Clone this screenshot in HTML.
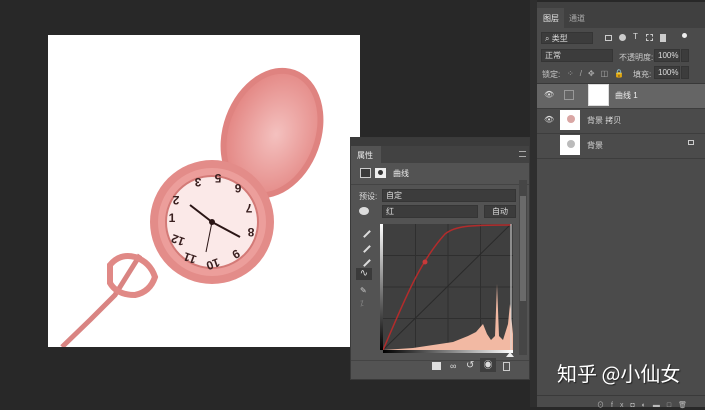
<!DOCTYPE html>
<html><head><meta charset="utf-8"><style>
*{margin:0;padding:0;box-sizing:border-box}
body{width:705px;height:407px;background:#282828;position:relative;overflow:hidden;font-family:"Liberation Sans","Noto Sans CJK SC",sans-serif;color:#ddd;font-size:8px}
.a{position:absolute}
.field{position:absolute;background:#3c3c3c;border:1px solid #353535;color:#ddd;font-size:8px;line-height:11px;padding-left:3px}
</style></head><body>
<div class="a" style="left:48px;top:35px;width:312px;height:312px;background:#fff;overflow:hidden">
<svg width="312" height="312" viewBox="48 35 312 312">
 <defs><radialGradient id="g1" cx="55%" cy="50%" r="55%"><stop offset="0" stop-color="#f4c1bf"/><stop offset="1" stop-color="#e48986"/></radialGradient></defs>
 <ellipse cx="272" cy="133" rx="49" ry="67" transform="rotate(20 272 133)" fill="#df8380"/>
 <ellipse cx="272" cy="133" rx="43" ry="61" transform="rotate(20 272 133)" fill="url(#g1)"/>
 <path d="M140 255 L115 295 L90 320 L62 347" stroke="#d98482" stroke-width="5" fill="none"/>
 <path d="M110 265 q10 -12 25 -8 q15 5 20 20 q-5 15 -20 18 q-18 0 -25 -12z" stroke="#e08986" stroke-width="6" fill="none"/>
 <circle cx="212" cy="222" r="62" fill="#e38c89"/>
 <circle cx="212" cy="222" r="54" fill="#ec9e9b"/>
 <circle cx="212" cy="222" r="46" fill="#fbe9e8" stroke="#d37a77" stroke-width="2"/>
 <g font-family="Liberation Sans" font-size="12" fill="#3a2020" font-weight="bold" text-anchor="middle">
  <text x="198" y="186" transform="rotate(180 198 182)">3</text><text x="218" y="182" transform="rotate(180 218 178)">5</text><text x="238" y="192" transform="rotate(180 238 188)">6</text>
  <text x="249" y="212" transform="rotate(180 249 208)">7</text><text x="251" y="236" transform="rotate(180 251 232)">8</text><text x="236" y="258" transform="rotate(150 236 254)">9</text>
  <text x="213" y="268" transform="rotate(160 213 264)">10</text><text x="190" y="262" transform="rotate(200 190 258)">11</text><text x="178" y="244" transform="rotate(200 178 240)">12</text>
  <text x="172" y="222">1</text><text x="176" y="204" transform="rotate(180 176 200)">2</text>
 </g>
 <line x1="212" y1="222" x2="190" y2="205" stroke="#2a1515" stroke-width="2"/>
 <line x1="212" y1="222" x2="240" y2="237" stroke="#2a1515" stroke-width="2"/>
 <line x1="212" y1="222" x2="206" y2="252" stroke="#2a1515" stroke-width="1"/>
 <circle cx="212" cy="222" r="3" fill="#2a1515"/>
</svg>
</div>
<div class="a" style="left:350px;top:137px;width:180px;height:243px;background:#535353;border:1px solid #3a3a3a">
 <div class="a" style="left:0;top:0;width:178px;height:8px;background:#3b3b3b"></div>
 <div class="a" style="left:0;top:8px;width:178px;height:17px;background:#424242"></div>
 <div class="a" style="left:0;top:8px;width:30px;height:17px;background:#535353;padding:4px 0 0 6px;color:#eee">属性</div>
 <div class="a" style="left:168px;top:13px;width:7px;height:6px;border-top:1px solid #aaa;border-bottom:1px solid #aaa"></div>
 <div class="a" style="left:9px;top:30px;width:11px;height:10px;border:1px solid #ccc;background:#3a3a3a"></div>
 <div class="a" style="left:24px;top:30px;width:11px;height:10px;background:#eee"><div style="width:5px;height:5px;border-radius:50%;background:#333;margin:2px 3px"></div></div>
 <div class="a" style="left:42px;top:30px;color:#eee">曲线</div>
 <div class="a" style="left:0;top:46px;width:178px;height:1px;background:#444"></div>
 <div class="a" style="left:8px;top:53px">预设:</div>
 <div class="field" style="left:31px;top:51px;width:134px;height:13px">自定</div>
 <div class="a" style="left:8px;top:69px;width:10px;height:8px;border-radius:50%;background:#ddd"></div>
 <div class="field" style="left:31px;top:67px;width:96px;height:13px">红</div>
 <div class="field" style="left:133px;top:67px;width:32px;height:13px;text-align:center;padding:0">自动</div>
 <div class="a" style="left:9px;top:89px;width:9px;height:9px;border-bottom:2px solid #ddd;transform:rotate(-45deg)"></div>
 <div class="a" style="left:9px;top:104px;width:9px;height:9px;border-bottom:2px solid #ddd;transform:rotate(-45deg)"></div>
 <div class="a" style="left:9px;top:118px;width:9px;height:9px;border-bottom:2px solid #ddd;transform:rotate(-45deg)"></div>
 <div class="a" style="left:5px;top:130px;width:16px;height:12px;background:#3a3a3a;color:#ddd;font-size:10px;line-height:11px;text-align:center">∿</div>
 <div class="a" style="left:9px;top:148px;color:#ccc">✎</div>
 <div class="a" style="left:9px;top:161px;color:#888">⁒</div>
 <div class="a" style="left:29px;top:86px;width:3px;height:126px;background:linear-gradient(#fff,#000)"></div>
 <svg class="a" style="left:32px;top:86px" width="130" height="126">
  <rect width="130" height="126" fill="#3f3f3f"/>
  <g stroke="#2f2f2f" stroke-width="1"><line x1="32.5" y1="0" x2="32.5" y2="126"/><line x1="65" y1="0" x2="65" y2="126"/><line x1="97.5" y1="0" x2="97.5" y2="126"/><line x1="0" y1="31.5" x2="130" y2="31.5"/><line x1="0" y1="63" x2="130" y2="63"/><line x1="0" y1="94.5" x2="130" y2="94.5"/></g>
  <line x1="0" y1="126" x2="128" y2="0" stroke="#2a2a2a"/>
  <path d="M0 126 L30 124 L50 121 L70 118 L85 112 L93 108 L100 100 L104 110 L108 116 L112 112 L114 60 L116 112 L120 116 L125 100 L127 80 L130 110 L130 126Z" fill="#f2b9a3"/>
  <path d="M0 126 C20 80 35 40 62 10 C72 2 85 1 128 1" stroke="#b22c2c" stroke-width="1.5" fill="none"/>
  <circle cx="42" cy="38" r="2.5" fill="#c83a3a"/>
  <line x1="128" y1="0" x2="128" y2="126" stroke="#ddd"/>
 </svg>
 <div class="a" style="left:32px;top:212px;width:130px;height:3px;background:linear-gradient(90deg,#000,#fff)"></div>
 <div class="a" style="left:155px;top:214px;width:0;height:0;border:4px solid transparent;border-bottom:5px solid #eee;border-top:0"></div>
 <div class="a" style="left:168px;top:42px;width:8px;height:175px;background:#464646"></div>
 <div class="a" style="left:169px;top:58px;width:6px;height:105px;background:#6a6a6a"></div>
 <div class="a" style="left:0;top:222px;width:178px;height:1px;background:#444"></div>
 <div class="a" style="left:81px;top:224px;width:9px;height:8px;background:#ddd"></div>
 <div class="a" style="left:99px;top:223px;color:#ddd;font-size:9px">∞</div>
 <div class="a" style="left:115px;top:222px;color:#ddd;font-size:10px">↺</div>
 <div class="a" style="left:129px;top:220px;width:16px;height:14px;background:#3e3e3e;color:#ddd;text-align:center;font-size:9px;line-height:14px">◉</div>
 <div class="a" style="left:152px;top:224px;width:7px;height:9px;border:1px solid #ccc"></div>
</div>
<div class="a" style="left:530px;top:0;width:7px;height:407px;background:#2e2e2e"></div>
<div class="a" style="left:537px;top:2px;width:168px;height:405px;background:#4b4b4b">
 <div class="a" style="left:0;top:0;width:168px;height:26px;background:#404040"></div>
 <div class="a" style="left:0;top:6px;width:27px;height:20px;background:#4b4b4b;color:#eee;padding:5px 0 0 6px">图层</div>
 <div class="a" style="left:32px;top:11px;color:#aaa">通道</div>
 <div class="field" style="left:4px;top:30px;width:52px;height:12px">⌕ 类型</div>
 <div class="a" style="left:68px;top:33px;width:7px;height:6px;border:1px solid #ccc"></div>
 <div class="a" style="left:82px;top:32px;width:7px;height:7px;border-radius:50%;background:#ccc"></div>
 <div class="a" style="left:96px;top:30px;color:#ddd">T</div>
 <div class="a" style="left:109px;top:32px;width:7px;height:7px;border:1px dashed #ccc"></div>
 <div class="a" style="left:123px;top:32px;width:6px;height:8px;background:#ccc"></div>
 <div class="a" style="left:145px;top:31px;width:5px;height:5px;border-radius:50%;background:#eee"></div>
 <div class="field" style="left:4px;top:47px;width:72px;height:13px">正常</div>
 <div class="a" style="left:82px;top:50px;color:#ccc">不透明度:</div>
 <div class="field" style="left:117px;top:47px;width:26px;height:13px">100%</div>
 <div class="field" style="left:144px;top:47px;width:8px;height:13px;padding:0"></div>
 <div class="a" style="left:5px;top:67px;color:#ccc">锁定:</div>
 <div class="a" style="left:30px;top:67px;color:#aaa;letter-spacing:6px">⁘/✥◫🔒</div>
 <div class="a" style="left:96px;top:67px;color:#ccc">填充:</div>
 <div class="field" style="left:117px;top:64px;width:26px;height:13px">100%</div>
 <div class="field" style="left:144px;top:64px;width:8px;height:13px;padding:0"></div>
 <div class="a" style="left:0;top:81px;width:168px;height:1px;background:#383838"></div>
 <div class="a" style="left:0;top:82px;width:168px;height:24px;background:#656565"></div>
 <div class="a" style="left:7px;top:88px;color:#ddd;font-size:8px">👁</div>
 <div class="a" style="left:27px;top:88px;width:10px;height:10px;border:1px solid #999"></div>
 <div class="a" style="left:51px;top:82px;width:21px;height:22px;background:#fff;border:1px solid #ddd"></div>
 <div class="a" style="left:78px;top:88px;color:#eee">曲线 1</div>
 <div class="a" style="left:0;top:106px;width:168px;height:1px;background:#3d3d3d"></div>
 <div class="a" style="left:7px;top:113px;color:#ddd">👁</div>
 <div class="a" style="left:23px;top:108px;width:20px;height:20px;background:#fff"><div style="margin:5px 0 0 7px;width:8px;height:8px;border-radius:50%;background:#d9a6a4"></div></div>
 <div class="a" style="left:50px;top:113px;color:#ddd">背景 拷贝</div>
 <div class="a" style="left:0;top:131px;width:168px;height:1px;background:#3d3d3d"></div>
 <div class="a" style="left:23px;top:133px;width:20px;height:20px;background:#fff"><div style="margin:5px 0 0 7px;width:8px;height:8px;border-radius:50%;background:#bbb"></div></div>
 <div class="a" style="left:50px;top:138px;color:#ddd">背景</div>
 <div class="a" style="left:151px;top:138px;width:6px;height:5px;border:1px solid #ccc"></div>
 <div class="a" style="left:0;top:156px;width:168px;height:1px;background:#3d3d3d"></div>
 <div class="a" style="left:20px;top:356px;color:#fff;font-size:20px;font-family:'Noto Sans CJK SC',sans-serif;text-shadow:1px 1px 1px #222;white-space:nowrap">知乎 @小仙女</div>
 <div class="a" style="left:0;top:393px;width:168px;height:1px;background:#3a3a3a"></div>
 <div class="a" style="left:60px;top:398px;color:#bbb;font-size:7px;letter-spacing:7px">⊙fx◘◐▬□🗑</div>
</div>
</body></html>
